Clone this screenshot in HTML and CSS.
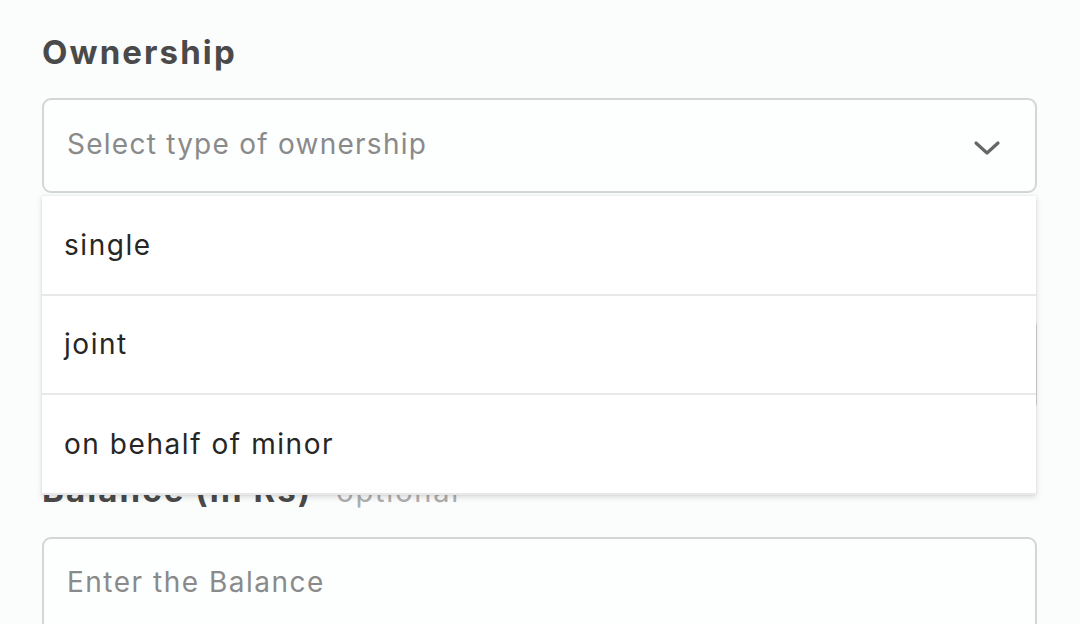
FILE: index.html
```html
<!DOCTYPE html>
<html lang="en">
<head>
<meta charset="utf-8">
<link rel="stylesheet" href="styles.css">
</head>
<body>
<div class="form">
  <div class="field">
    <div class="label">Ownership</div>
    <div class="select-wrap">
      <div class="box select">
        <span class="placeholder">Select type of ownership</span>
        <svg class="chevron" width="28" height="16" viewBox="0 0 28 16"><path d="M3 3 L14 13 L25 3" fill="none" stroke="#666" stroke-width="3.2" stroke-linecap="round" stroke-linejoin="round"/></svg>
      </div>
      <ul class="menu">
        <li class="item">single</li>
        <li class="item">joint</li>
        <li class="item">on behalf of minor</li>
      </ul>
    </div>
  </div>
  <div class="field">
    <div class="label-spacer"></div>
    <div class="box select"></div>
  </div>
  <div class="field">
    <div class="label">Balance (in Rs) <span class="optional">optional</span></div>
    <div class="box input">
      <span class="placeholder">Enter the Balance</span>
    </div>
  </div>
</div>
</body>
</html>
```

FILE: styles.css
```css
html, body {
  margin: 0;
  padding: 0;
  background: #fbfcfc;
  font-family: "Inter", "Open Sans", sans-serif;
  overflow: hidden;
}
.form {
  padding: 30px 43px 0 42px;
  display: flex;
  flex-direction: column;
}
.field {
  display: flex;
  flex-direction: column;
}
.field + .field {
  margin-top: 56px;
}
.label {
  font-size: 33px;
  font-weight: 650;
  color: #4a4a4a;
  line-height: 45px;
  margin-bottom: 23px;
  letter-spacing: 2.1px;
}
.label-spacer {
  height: 45px;
  margin-bottom: 23px;
}
.optional {
  font-weight: 400;
  color: #adadad;
  font-size: 29px;
  margin-left: 14px;
  letter-spacing: 1.8px;
}
.select-wrap {
  position: relative;
}
.box {
  box-sizing: border-box;
  height: 95px;
  border: 2px solid #d3d6d6;
  border-radius: 9px;
  background: #fdfefe;
  display: flex;
  align-items: center;
  padding: 0 34px 4px 23px;
  justify-content: space-between;
}
.placeholder {
  font-size: 28px;
  color: #8a8a8a;
  letter-spacing: 1.25px;
}
.chevron {
  display: block;
  margin-top: 8px;
}
.menu {
  position: absolute;
  left: 0;
  right: 1px;
  top: 98px;
  margin: 0;
  padding: 0;
  list-style: none;
  background: #ffffff;
  box-shadow: 0 2px 6px rgba(0, 0, 0, 0.14), 0 0 2px rgba(0, 0, 0, 0.08);
  z-index: 2;
}
.item {
  height: 99.5px;
  box-sizing: border-box;
  border-bottom: 2px solid #e8e8e8;
  display: flex;
  align-items: center;
  padding-left: 22px;
  font-size: 28px;
  color: #262626;
  letter-spacing: 1.55px;
}
.input {
  height: 120px;
  align-items: flex-start;
  padding-top: 26px;
}
.input .placeholder {
  letter-spacing: 1.5px;
}
```
